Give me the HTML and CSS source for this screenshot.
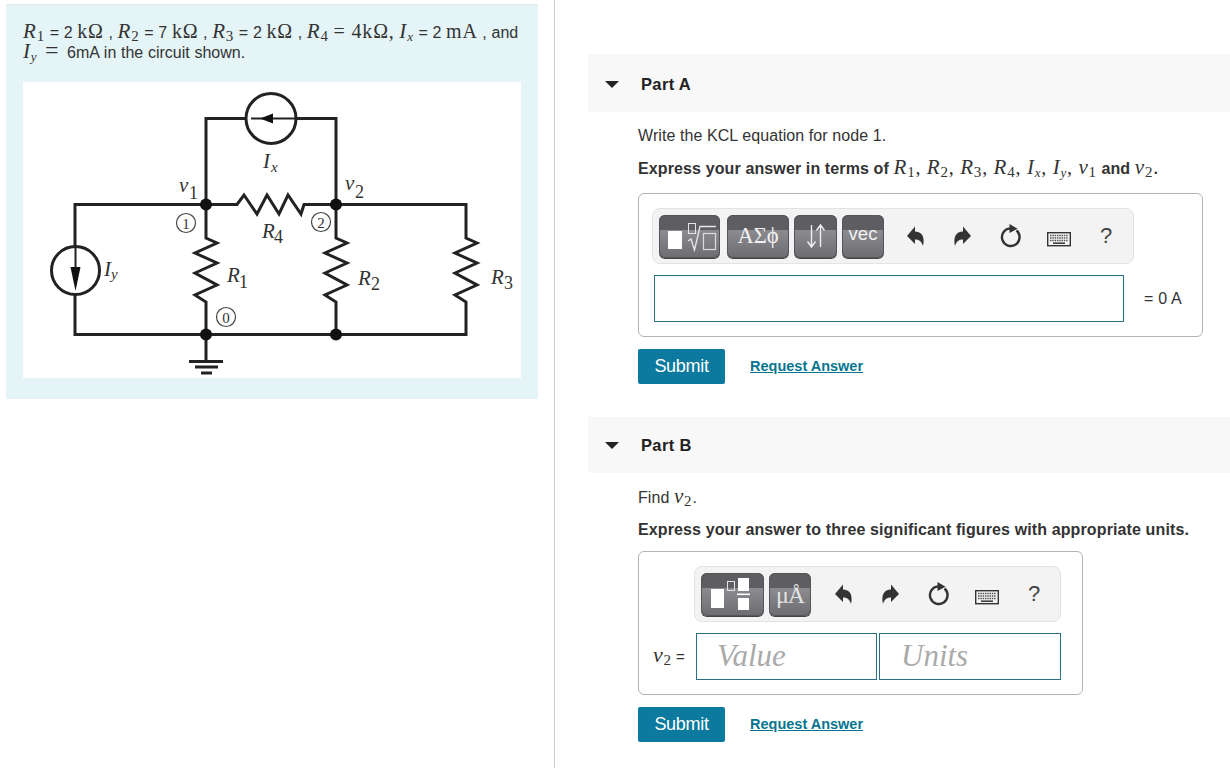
FILE: index.html
```html
<!DOCTYPE html>
<html lang="en">
<head>
<meta charset="utf-8">
<title>Circuit problem</title>
<link rel="stylesheet" href="styles.css">
</head>
<body>
<svg class="defs" width="0" height="0" aria-hidden="true">
  <symbol id="i-undo" viewBox="0 0 20 20"><path d="M3 10 L11 0.5 V5.5 C18 5.5 21 11 19 20 C17.5 15 15 13.5 11 13.5 V18 Z"/></symbol>
  <symbol id="i-redo" viewBox="0 0 20 20"><path d="M19 10 L11 0.5 V5.5 C4 5.5 1 11 3 20 C4.5 15 7 13.5 11 13.5 V18 Z"/></symbol>
  <symbol id="i-reset" viewBox="0 0 24 24"><path d="M18.5 6.5 A8.8 8.8 0 1 1 12 4.4" fill="none" stroke="#333" stroke-width="2.4"/><path d="M11.5 0 L19.5 4.8 L11.5 9 Z"/></symbol>
  <symbol id="i-keys" viewBox="0 0 26 18"><rect x="2.7" y="2.7" width="22.6" height="13" fill="#f4f4f4" stroke="#333" stroke-width="1.4"/><path d="M5 5.5h18M5 8h18M5 10.5h18" stroke="#555" stroke-width="1.3" stroke-dasharray="1.5 .8"/><path d="M8 13.2h12" stroke="#333" stroke-width="1.5"/></symbol>
</svg>

<main class="page">
  <section class="left">
    <div class="intro">
      <p class="intro-text"><span class="m">R<sub>1</sub></span> = 2 <span class="u">kΩ</span> , <span class="m">R<sub>2</sub></span> = 7 <span class="u">kΩ</span> , <span class="m">R<sub>3</sub></span> = 2 <span class="u">kΩ</span> , <span class="m">R<sub>4</sub></span> <span class="u">= 4kΩ,</span> <span class="m">I<sub><i>x</i></sub></span> = 2 <span class="u">mA</span> , and<br><span class="m">I<sub><i>y</i></sub></span> <span class="u eqs">=</span> 6mA in the circuit shown.</p>
      <svg class="circuit" viewBox="23 82 498 296" width="498" height="296" role="img" aria-label="Circuit diagram">
        <g class="wire">
          <path d="M206 204.5 V118.5 H246 M296 118.5 H336 V204.5"/>
          <path d="M75 246 V204.5 H206 H237 L244 195 L257 214 L267 195 L279 214 L288 195 L301 214 L304 204.5 H336 H466 V238 L477 243 L455 253 L477 263 L455 273 L477 285 L455 295 L466 302 V334.5 H75 V294"/>
          <path d="M206 204.5 V238 L217 243 L195 253 L217 263 L195 273 L217 285 L195 295 L206 302 V361"/>
          <path d="M336 204.5 V238 L347 243 L325 253 L347 263 L325 273 L347 285 L325 295 L336 302 V334.5"/>
          <circle cx="271" cy="118.5" r="25"/>
          <circle cx="75.5" cy="270.5" r="24"/>
          <path d="M75.5 248 V270 M251 118.5 H295" class="thin"/>
          <path d="M189 361.5 H223 M195 367 H218 M201 373 H212"/>
        </g>
        <path d="M260 118.5 L273 113.5 V123.5 Z" class="fill"/>
        <path d="M75.5 291 L70.5 267 H80.5 Z" class="fill"/>
        <g class="fill">
          <circle cx="206" cy="204.5" r="6"/><circle cx="336" cy="204.5" r="6"/>
          <circle cx="206" cy="334.5" r="6"/><circle cx="336" cy="334.5" r="6"/>
        </g>
        <g class="ring">
          <circle cx="186" cy="223" r="9.5"/><circle cx="321" cy="222" r="9.5"/><circle cx="226" cy="317" r="9.5"/>
        </g>
        <g class="num">
          <text x="186" y="228.5">1</text><text x="321" y="227.5">2</text><text x="226" y="322.5">0</text>
        </g>
        <g class="lab">
          <text x="263" y="168">I</text><text x="271" y="172" class="sub">x</text>
          <text x="179" y="192">v</text><text x="189" y="199" class="sub up">1</text>
          <text x="345" y="190">v</text><text x="355" y="198" class="sub up">2</text>
          <text x="262" y="238">R</text><text x="274" y="243" class="sub up">4</text>
          <text x="227" y="282">R</text><text x="239" y="288" class="sub up">1</text>
          <text x="358" y="285">R</text><text x="371" y="290" class="sub up">2</text>
          <text x="491" y="284">R</text><text x="504" y="289" class="sub up">3</text>
          <text x="104" y="276">I</text><text x="111" y="279" class="sub">y</text>
        </g>
      </svg>
    </div>
  </section>

  <section class="right">
    <article class="part part-a">
      <header class="part-head"><span class="caret"></span><h2>Part A</h2></header>
      <div class="part-body">
        <p class="lead">Write the KCL equation for node 1.</p>
        <p class="ask">Express your answer in terms of <span class="m">R<sub>1</sub></span><span class="u c">,</span> <span class="m">R<sub>2</sub></span><span class="u c">,</span> <span class="m">R<sub>3</sub></span><span class="u c">,</span> <span class="m">R<sub>4</sub></span><span class="u c">,</span> <span class="m">I<sub><i>x</i></sub></span><span class="u c">,</span> <span class="m">I<sub><i>y</i></sub></span><span class="u c">,</span> <span class="m">v<sub>1</sub></span> and <span class="m">v<sub>2</sub></span><span class="u">.</span></p>
        <div class="answer answer-a">
          <div class="toolbar tb-a">
            <button class="tool t-root" type="button" aria-label="templates">
              <svg width="61" height="43" viewBox="0 0 61 43"><rect x="9" y="16" width="14" height="18" fill="#fff"/><rect x="29.5" y="8.5" width="7" height="10" fill="none" stroke="#e4e4e4"/><path d="M29 26 L32 24 L35.5 35 L41 11.5 H57" fill="none" stroke="#e8e8e8" stroke-width="1.3"/><rect x="44.5" y="18.5" width="12" height="16" fill="none" stroke="#dcdcdc" stroke-width="1.2"/></svg>
            </button>
            <button class="tool t-greek" type="button">ΑΣϕ</button>
            <button class="tool t-arrows" type="button" aria-label="arrows">
              <svg width="20" height="26" viewBox="0 0 20 26"><path d="M5.5 2 V23 M1.5 18.5 L5.5 24 L9.5 18.5 M14.5 24 V3 M10.5 7.5 L14.5 2 L18.5 7.5" fill="none" stroke="#f0f0f0" stroke-width="1.4"/></svg>
            </button>
            <button class="tool t-vec" type="button">vec</button>
            <span class="ico"><svg width="20" height="20"><use href="#i-undo"/></svg></span>
            <span class="ico"><svg width="20" height="20"><use href="#i-redo"/></svg></span>
            <span class="ico"><svg width="24" height="24"><use href="#i-reset"/></svg></span>
            <span class="ico ico-keys"><svg width="26" height="18"><use href="#i-keys"/></svg></span>
            <span class="ico help">?</span>
          </div>
          <div class="row-a">
            <div class="field field-wide"></div>
            <span class="eq">= 0 A</span>
          </div>
        </div>
        <div class="actions"><button class="submit" type="button">Submit</button><a class="req" href="#">Request Answer</a></div>
      </div>
    </article>

    <article class="part part-b">
      <header class="part-head"><span class="caret"></span><h2>Part B</h2></header>
      <div class="part-body">
        <p class="lead">Find <span class="m">v<sub>2</sub></span>.</p>
        <p class="ask">Express your answer to three significant figures with appropriate units.</p>
        <div class="answer answer-b">
          <div class="toolbar tb-b">
            <button class="tool t-frac" type="button" aria-label="templates">
              <svg width="63" height="43" viewBox="0 0 63 43"><rect x="10" y="16" width="13" height="19" fill="#fff"/><rect x="26.5" y="8.5" width="7" height="9" fill="none" stroke="#e4e4e4"/><rect x="37" y="5" width="11" height="13" fill="#fff"/><rect x="36" y="20.5" width="13" height="1.6" fill="#fff"/><rect x="37" y="25" width="11" height="12" fill="#fff"/></svg>
            </button>
            <button class="tool t-unit" type="button">μÅ</button>
            <span class="ico"><svg width="20" height="20"><use href="#i-undo"/></svg></span>
            <span class="ico"><svg width="20" height="20"><use href="#i-redo"/></svg></span>
            <span class="ico"><svg width="24" height="24"><use href="#i-reset"/></svg></span>
            <span class="ico ico-keys"><svg width="26" height="18"><use href="#i-keys"/></svg></span>
            <span class="ico help">?</span>
          </div>
          <div class="row-b">
            <span class="var"><span class="m">v<sub>2</sub></span> =</span>
            <div class="field field-b first">Value</div>
            <div class="field field-b">Units</div>
          </div>
        </div>
        <div class="actions"><button class="submit" type="button">Submit</button><a class="req" href="#">Request Answer</a></div>
      </div>
    </article>
  </section>
</main>
</body>
</html>
```

FILE: styles.css
```css
* { box-sizing: border-box; }
html, body { margin: 0; padding: 0; height: 100%; overflow: hidden; }
body { background: #fff; color: #333; font: 16px/20px "Liberation Sans", Arial, sans-serif; }
.defs { position: absolute; }
p { margin: 0; }

.page { display: flex; height: 768px; }

.left { flex: 0 0 555px; border-right: 1px solid #cfcfcf; padding: 4px 0 0 6px; }
.intro { width: 532px; height: 395px; background: #e5f5f7; border-top: 1px solid #e2e6e7; padding: 18px 0 0 17px; }
.intro-text { height: 39px; white-space: nowrap; word-spacing: 0.25px; }
.circuit { display: block; margin-top: 20px; background: #fff; }

.m { font-family: "Liberation Serif", serif; font-style: italic; font-weight: normal; font-size: 21px; line-height: 0; letter-spacing: 0.8px; }
.m sub { font-size: 15px; font-style: normal; line-height: 0; vertical-align: -3px; }
.m sub i { font-size: 13px; }
.u { font-family: "Liberation Serif", serif; font-size: 20px; font-weight: normal; line-height: 0; letter-spacing: 0.8px; }
.u.c { margin-right: 1px; }
.u.eqs { font-size: 24px; margin: 0 3px; }

.wire { fill: none; stroke: #222; stroke-width: 3; }
.wire .thin { stroke-width: 2; }
.fill { fill: #111; stroke: none; }
.ring { fill: #fff; stroke: #444; stroke-width: 1.2; }
.num text { font: 15px "Liberation Serif", serif; text-anchor: middle; fill: #333; }
.lab text { font: italic 21px "Liberation Serif", serif; fill: #333; }
.lab .sub { font-size: 15px; }
.lab .up { font-style: normal; font-size: 18px; }

.right { flex: 1; padding: 54px 0 0 33px; min-width: 0; }
.part-head { display: flex; align-items: center; background: #f8f8f8; height: 58px; padding: 2px 0 0 17px; }
.part-b .part-head { height: 56px; padding-top: 0; }
.part-a { height: 363px; }
.caret { width: 0; height: 0; border-left: 7.5px solid transparent; border-right: 7.5px solid transparent; border-top: 7px solid #222; margin-right: 21px; }
h2 { margin: 0; font-size: 16.5px; font-weight: bold; color: #222; line-height: 20px; letter-spacing: 0.35px; padding-left: 1px; }
.part-body { padding: 14px 0 0 50px; }
.part-b .part-body { padding-top: 15px; }
.lead { height: 20px; letter-spacing: 0.08px; }
.ask { margin-top: 13px; font-weight: bold; height: 20px; white-space: nowrap; letter-spacing: 0.12px; }
.part-b .ask { margin-top: 12px; }

.answer { border: 1px solid #b4b4b4; border-radius: 6px; background: #fff; margin-top: 14px; }
.answer-a { width: 565px; height: 144px; padding: 14px 0 0 13px; }
.answer-b { width: 445px; height: 144px; margin-top: 11px; padding: 14px 0 0 13px; }

.toolbar { display: flex; align-items: center; height: 56px; background: #f3f3f3; border: 1px solid #e3e3e3; border-radius: 8px; }
.tb-a { width: 482px; padding-left: 6px; }
.tb-b { width: 367px; margin-left: 42px; padding-left: 6px; }

.tool { height: 43px; padding: 0; border: 0; border-radius: 6px; color: #f2f2f2; font-family: "Liberation Sans", sans-serif; box-shadow: inset 0 0 0 1px #55555a, 0 1px 0 #444; background: linear-gradient(#5e5e62 0, #5e5e62 34%, #8b8b90 35%, #6c6c71 100%); display: flex; align-items: center; justify-content: center; flex: none; }
.t-root { width: 61px; margin-right: 7px; }
.t-greek { width: 62px; margin-right: 5px; font: 22.5px "Liberation Serif", serif; }
.t-arrows { width: 43px; margin-right: 5px; }
.t-vec { width: 42px; font-size: 18.5px; padding-bottom: 4px; }
.t-frac { width: 63px; margin-right: 5px; }
.t-unit { width: 42px; font: 24px "Liberation Serif", serif; padding-top: 2px; letter-spacing: -1px; color: #e4e4e4; }

.ico { flex: none; width: 48px; display: flex; justify-content: center; align-items: center; fill: #333; }
.ico-keys svg { margin-top: 5px; }
.tb-a .t-vec + .ico { margin-left: 6px; }
.tb-b .t-unit + .ico { margin-left: 7px; }
.help { font-size: 22px; color: #444; }

.field { border: 1px solid #2b7083; background: #fff; }
.row-a { display: flex; align-items: center; margin: 11px 0 0 2px; }
.field-wide { width: 470px; height: 47px; }
.eq { margin-left: 20px; letter-spacing: 0.2px; }
.row-b { display: flex; align-items: center; gap: 2px; margin-top: 11px; }
.var { width: 42px; padding-left: 1px; white-space: nowrap; font-size: 15px; }
.var .m { font-size: 22px; }
.field-b { width: 182px; height: 47px; padding-left: 21px; font: italic 31px/43px "Liberation Serif", serif; color: #aaa; }
.field-b.first { width: 181px; padding-left: 20px; }

.actions { display: flex; align-items: center; margin-top: 12px; }
.submit { width: 87px; height: 35px; border: 0; border-radius: 2px; background: #0b7a9e; color: #fff; font: 18px "Liberation Sans", sans-serif; padding: 0; letter-spacing: -0.3px; }
.req { margin-left: 25px; padding-bottom: 2px; color: #07758f; font-size: 14.5px; font-weight: bold; text-decoration: underline; }
```
